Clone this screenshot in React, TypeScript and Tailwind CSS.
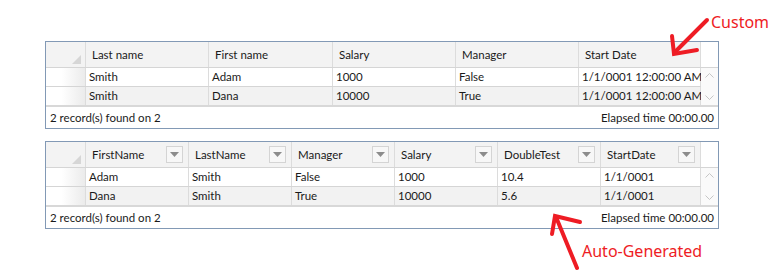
import React from 'react';

type Col = { title: string; width: number };

const font = { fontFamily: 'Lato, "Noto Sans", sans-serif' };
const noteFont = { fontFamily: '"Noto Sans", "Open Sans", sans-serif' };

const customCols: Col[] = [
  { title: 'Last name', width: 123 },
  { title: 'First name', width: 124 },
  { title: 'Salary', width: 123 },
  { title: 'Manager', width: 123 },
  { title: 'Start Date', width: 122 },
];

const customRows = [
  ['Smith', 'Adam', '1000', 'False', '1/1/0001 12:00:00 AM'],
  ['Smith', 'Dana', '10000', 'True', '1/1/0001 12:00:00 AM'],
];

const autoCols: Col[] = [
  { title: 'FirstName', width: 103 },
  { title: 'LastName', width: 103 },
  { title: 'Manager', width: 103 },
  { title: 'Salary', width: 103 },
  { title: 'DoubleTest', width: 103 },
  { title: 'StartDate', width: 100 },
];

const autoRows = [
  ['Adam', 'Smith', 'False', '1000', '10.4', '1/1/0001'],
  ['Dana', 'Smith', 'True', '10000', '5.6', '1/1/0001'],
];

const FilterButton: React.FC = () => (
  <div className="w-[17px] h-[17px] border border-[#d4d4d4] bg-[#f7f7f7] flex items-center justify-center">
    <svg width="9" height="5" viewBox="0 0 9 5">
      <path d="M0 0 L9 0 L4.5 5 Z" fill="#8c8c8c" />
    </svg>
  </div>
);

const Corner: React.FC = () => (
  <div className="w-[40px] h-full shrink-0 border-r border-[#dcdcdc] bg-[#f3f3f3] relative">
    <svg className="absolute right-[4px] bottom-[3px]" width="9" height="9" viewBox="0 0 9 9">
      <path d="M9 0 L9 9 L0 9 Z" fill="#d6d6d6" />
    </svg>
  </div>
);

const Grid: React.FC<{ cols: Col[]; rows: string[][]; filters?: boolean }> = ({
  cols,
  rows,
  filters,
}) => (
  <div className="w-[674px] border border-[#8299b5] bg-white text-[11.5px] text-[#1a1a1a] whitespace-nowrap" style={font}>
    {/* header */}
    <div className="flex h-[26px] border-b border-[#d5d5d5]">
      <Corner />
      {cols.map((c) => (
        <div
          key={c.title}
          className="h-full shrink-0 border-r border-[#dcdcdc] bg-[#f3f3f3] flex items-center justify-between pl-[6px] pr-[5px]"
          style={{ width: c.width }}
        >
          <span>{c.title}</span>
          {filters && <FilterButton />}
        </div>
      ))}
      <div className="flex-1 bg-white" />
    </div>
    {/* rows + scrollbar */}
    <div className="flex border-b-2 border-[#d8d8d8]">
      <div className="flex flex-col">
        {rows.map((r, i) => (
          <div
            key={i}
            className={`flex ${i === 0 ? 'h-[19px] border-b border-[#d5d5d5] bg-white' : 'h-[18px] bg-[#f2f2f2]'}`}
          >
            <div className="w-[40px] shrink-0 border-r border-[#dcdcdc] bg-gradient-to-r from-white from-40% to-[#ebebeb]" />
            {r.map((v, j) => (
              <div
                key={j}
                className="shrink-0 border-r border-[#dcdcdc] flex items-center pl-[3px] leading-none"
                style={{ width: cols[j].width }}
              >
                {v}
              </div>
            ))}
          </div>
        ))}
      </div>
      <div className="flex-1 bg-[#fafafa] flex flex-col items-center justify-between py-[5px]">
        <svg width="9" height="5" viewBox="0 0 9 5">
          <path d="M0.5 4.5 L4.5 0.5 L8.5 4.5" fill="none" stroke="#c6c6c6" strokeWidth="1" />
        </svg>
        <svg width="9" height="5" viewBox="0 0 9 5">
          <path d="M0.5 0.5 L4.5 4.5 L8.5 0.5" fill="none" stroke="#c6c6c6" strokeWidth="1" />
        </svg>
      </div>
    </div>
    {/* footer */}
    <div className="flex h-[21px] items-center justify-between pl-[4px] pr-[4px]">
      <span>2 record(s) found on 2</span>
      <span>Elapsed time 00:00.00</span>
    </div>
  </div>
);

const App: React.FC = () => {
  return (
    <div className="relative w-[772px] h-[272px] bg-white overflow-hidden">
      <div className="flex flex-col gap-[12px] pt-[41px] pl-[45px]">
        <Grid cols={customCols} rows={customRows} />
        <Grid cols={autoCols} rows={autoRows} filters />
      </div>

      {/* annotations */}
      <svg className="absolute left-0 top-0 pointer-events-none" width="772" height="272">
        <g stroke="#ee1c24" strokeWidth="4" strokeLinecap="round" fill="none">
          <path d="M707 20 L674 53" />
          <path d="M672 36 L674 54 L697 50" />
          <path d="M577 268 L556 217" />
          <path d="M552 234 L555 216 L580 222" />
        </g>
      </svg>
      <span
        className="absolute left-[711px] top-[14px] text-[16px] text-[#ee1c24] leading-none"
        style={noteFont}
      >
        Custom
      </span>
      <span
        className="absolute left-[582px] top-[243px] text-[16px] text-[#ee1c24] leading-none"
        style={noteFont}
      >
        Auto-Generated
      </span>
    </div>
  );
};

export default App;
